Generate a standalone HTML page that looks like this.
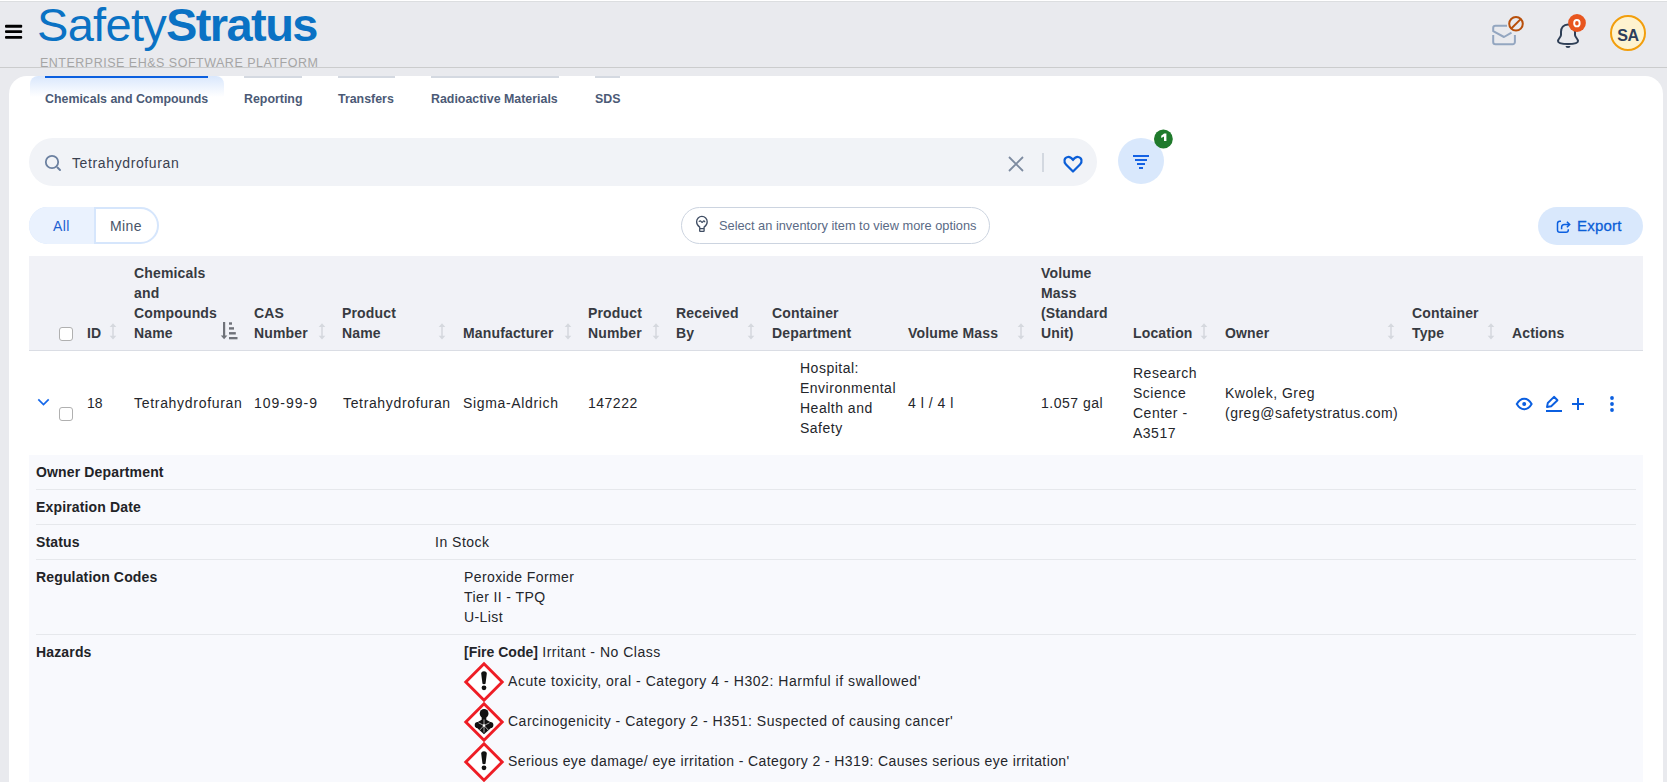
<!DOCTYPE html>
<html><head><meta charset="utf-8">
<style>
*{box-sizing:border-box;margin:0;padding:0}
html,body{width:1667px;height:782px;overflow:hidden}
body{background:#e9eaee;font-family:"Liberation Sans",sans-serif;position:relative;color:#2b303b}
.a{position:absolute;white-space:nowrap}
.topline{position:absolute;left:0;top:0;width:1667px;height:1px;background:#ffffff}
.topb{position:absolute;left:0;top:1px;width:1667px;height:1px;background:#dcdee0}
.hdrb{position:absolute;left:0;top:67px;width:1667px;height:1px;background:#cbcccd}
.card{position:absolute;left:9px;top:76px;width:1654px;height:760px;background:#fff;border-radius:18px}
.burger{position:absolute;left:5px;width:17px;height:3px;background:#000;border-radius:1px}
.logo{left:37px;top:-3px;font-size:47px;line-height:56px;color:#0a72c4}
.ent{left:40px;top:55px;font-size:12.5px;line-height:16px;color:#a5a5a5;letter-spacing:0.5px;height:12px;overflow:hidden}
.tab{font-size:12.4px;font-weight:700;line-height:16px;color:#4b5a76;top:91px}
.tabline{position:absolute;top:76px;height:2px;background:#d4d9e1}
.th{font-size:14px;font-weight:700;line-height:20px;color:#373a41;letter-spacing:0.15px}
.td{font-size:14px;line-height:20px;color:#24262b;letter-spacing:0.5px}
.lbl{font-size:14px;font-weight:700;line-height:20px;color:#222327;left:36px;letter-spacing:0.15px}
.div{position:absolute;left:36px;width:1600px;height:1px;background:#e6e8ec}
.sort{position:absolute;width:7px;height:17px}
.cb{position:absolute;width:14px;height:14px;border:1px solid #b0b0b0;border-radius:3px;background:#fff}
</style></head><body>
<div class="topline"></div><div class="topb"></div>
<div class="hdrb"></div>
<div class="card"></div>

<!-- hamburger -->
<svg class="a" style="left:0;top:20px" width="30" height="24" viewBox="0 20 30 24"><rect x="5" y="24.8" width="17.2" height="2.9" rx="1" fill="#000"/><rect x="5" y="30.3" width="17.2" height="2.8" rx="1" fill="#000"/><rect x="5" y="35.9" width="17.2" height="2.9" rx="1" fill="#000"/></svg>

<div class="a logo"><span style="letter-spacing:-0.7px">Safety</span><span style="font-weight:700;letter-spacing:-1.6px">Stratus</span></div>
<div class="a ent">ENTERPRISE EH&amp;S SOFTWARE PLATFORM</div>


<!-- mail icon -->
<svg class="a" style="left:1488px;top:12px" width="40" height="38" viewBox="1488 12 40 38">
 <path d="M1507 25.8 H1495.5 a2.3 2.3 0 0 0 -2.3 2.3 V31.2 L1504 37 L1511.5 32.6" fill="none" stroke="#93a6c0" stroke-width="2" stroke-linejoin="round"/>
 <path d="M1493.2 35 V42 a2.3 2.3 0 0 0 2.3 2.3 H1512.6 a2.3 2.3 0 0 0 2.3 -2.3 V35" fill="none" stroke="#93a6c0" stroke-width="2"/>
 <circle cx="1516" cy="23.8" r="6.8" fill="none" stroke="#b84f0a" stroke-width="2"/>
 <path d="M1511.3 28.5 L1520.7 19.1" stroke="#b84f0a" stroke-width="2"/>
</svg>
<!-- bell -->
<svg class="a" style="left:1552px;top:12px" width="36" height="40" viewBox="1552 12 36 40">
 <path d="M1568 24.5 c-4.5 0 -7 3.5 -7 7.5 v3 c0 2 -3 4 -3 6 c0 2 4 3 10 3 c6 0 10 -1 10 -3 c0 -2 -3 -4 -3 -6 v-3 c0 -4 -2.5 -7.5 -7 -7.5z" fill="none" stroke="#2e3e55" stroke-width="2"/>
 <path d="M1565.5 46 h5 a2.5 2 0 0 1 -5 0z" fill="#2e3e55"/>
</svg>
<svg class="a" style="left:1566px;top:12px" width="22" height="22" viewBox="1566 12 22 22"><circle cx="1577" cy="23" r="8.9" fill="#e8561f"/><ellipse cx="1576.9" cy="23.2" rx="2.75" ry="3.2" fill="none" stroke="#fff" stroke-width="1.9"/></svg>
<!-- avatar -->
<div class="a" style="left:1610px;top:15px;width:36px;height:36px;border-radius:18px;background:#fef3cf;border:2px solid #f29e0c;color:#2d3e5c;font-size:16px;font-weight:700;line-height:38px;text-align:center;letter-spacing:-0.3px">SA</div>

<!-- tabs -->
<div class="a" style="left:30px;top:76px;width:194px;height:30px;border-radius:8px 8px 0 0;background:linear-gradient(#d9e7fc,#ffffff 70%)"></div>
<div class="tabline" style="left:45px;width:163px;background:#0b5fdf"></div>
<div class="tabline" style="left:244px;width:58px"></div>
<div class="tabline" style="left:338px;width:57px"></div>
<div class="tabline" style="left:431px;width:128px"></div>
<div class="tabline" style="left:595px;width:25px"></div>
<div class="a tab" style="left:45px">Chemicals and Compounds</div>
<div class="a tab" style="left:244px">Reporting</div>
<div class="a tab" style="left:338px">Transfers</div>
<div class="a tab" style="left:431px">Radioactive Materials</div>
<div class="a tab" style="left:595px">SDS</div>

<!-- search -->
<div class="a" style="left:29px;top:138px;width:1068px;height:48px;border-radius:24px;background:#f1f3f7"></div>
<svg class="a" style="left:44px;top:154px" width="20" height="20" viewBox="0 0 20 20">
 <circle cx="8" cy="8" r="6.2" fill="none" stroke="#6b80a0" stroke-width="1.8"/>
 <path d="M13.5 13.5 L16 16" stroke="#6b80a0" stroke-width="2" stroke-linecap="round"/>
</svg>
<div class="a td" style="left:72px;top:153px;color:#3a4150;letter-spacing:0.62px">Tetrahydrofuran</div>
<svg class="a" style="left:1007px;top:155px" width="18" height="18" viewBox="0 0 18 18">
 <path d="M2 2 L16 16 M16 2 L2 16" stroke="#7d8ba0" stroke-width="1.8"/>
</svg>
<div class="a" style="left:1042px;top:153px;width:2px;height:19px;background:#d3d8e0"></div>
<svg class="a" style="left:1062px;top:154px" width="22" height="20" viewBox="0 0 22 20">
 <path d="M11 17.5 L4 10.5 C1.5 8 2 3.5 5.8 3 C8.2 2.7 10 4.5 11 6 C12 4.5 13.8 2.7 16.2 3 C20 3.5 20.5 8 18 10.5 Z" fill="none" stroke="#0b5ed7" stroke-width="2.2" stroke-linejoin="round"/>
</svg>
<!-- filter -->
<div class="a" style="left:1118px;top:138px;width:46px;height:46px;border-radius:23px;background:#d9e8fc"></div>
<div class="a" style="left:1133px;top:155px;width:16px;height:2px;background:#1462e4"></div>
<div class="a" style="left:1135px;top:159px;width:12px;height:2px;background:#1462e4"></div>
<div class="a" style="left:1137px;top:163px;width:8px;height:2px;background:#1462e4"></div>
<div class="a" style="left:1139px;top:167px;width:4px;height:2px;background:#1462e4"></div>
<svg class="a" style="left:1150px;top:126px" width="27" height="27" viewBox="0 0 27 27"><circle cx="13.4" cy="13" r="9.4" fill="#1f7a2c"/><path d="M11.2 9.7 L14.1 7.6 H16.4 V15 H14 V10.4 L11.2 12 Z" fill="#fff"/></svg>

<!-- all / mine -->
<div class="a" style="left:29px;top:207px;width:130px;height:37px;border-radius:19px;background:#fff;border:2px solid #d6e6fc"></div>
<div class="a" style="left:29px;top:207px;width:65px;height:37px;border-radius:19px 0 0 19px;background:#eaf2fe"></div><div class="a" style="left:94px;top:207px;width:2px;height:37px;background:#d6e6fc"></div>
<div class="a" style="left:53px;top:216px;font-size:14px;line-height:20px;color:#1b60d1;letter-spacing:0.4px">All</div>
<div class="a" style="left:110px;top:216px;font-size:14px;line-height:20px;color:#4a5568;letter-spacing:0.4px">Mine</div>

<!-- hint -->
<div class="a" style="left:681px;top:207px;width:309px;height:37px;border-radius:19px;background:#fff;border:1px solid #ccd4e0"></div>
<svg class="a" style="left:692px;top:213px" width="20" height="22" viewBox="0 0 20 22">
 <path d="M7.7 15.8 V14.1 C5.7 12.9 4.6 11 4.6 8.8 C4.6 5.7 7 3.4 9.9 3.4 C12.9 3.4 15.2 5.7 15.2 8.8 C15.2 11 14.1 12.9 12.1 14.1 V15.8" fill="none" stroke="#3f4d63" stroke-width="1.3"/>
 <rect x="7.7" y="15.7" width="4.4" height="2.7" rx="0.5" fill="none" stroke="#3f4d63" stroke-width="1.3"/>
 <path d="M7.2 8.4 C8 7.6 8.5 7.6 9.2 8.6 C9.9 9.6 10.4 9.6 11 8.6 C11.6 7.6 12.1 7.6 12.8 8.8" fill="none" stroke="#3f4d63" stroke-width="1.2" stroke-linecap="round"/>
</svg>
<div class="a" style="left:719px;top:218px;font-size:12.8px;line-height:16px;color:#5a6a85">Select an inventory item to view more options</div>

<!-- export -->
<div class="a" style="left:1538px;top:207px;width:105px;height:38px;border-radius:19px;background:#d9e8fc"></div>
<svg class="a" style="left:1555px;top:218px" width="18" height="18" viewBox="0 0 18 18">
 <path d="M6 3.2 H4.8 a2.3 2.3 0 0 0 -2.3 2.3 V11.9 a2.3 2.3 0 0 0 2.3 2.3 H11 a2.3 2.3 0 0 0 2.3 -2.3 V11.2" fill="none" stroke="#0b5fe0" stroke-width="1.5"/>
 <path d="M6.6 11.2 V9.3 a2.8 2.8 0 0 1 2.8 -2.8 H14.6 M11.9 3.7 L14.7 6.5 L11.9 9.3" fill="none" stroke="#0b5fe0" stroke-width="1.5"/>
</svg>
<div class="a" style="left:1577px;top:216px;font-size:15px;line-height:20px;color:#0b5ed7;letter-spacing:0.2px;-webkit-text-stroke:0.3px #0b5ed7">Export</div>

<!-- table header -->
<div class="a" style="left:29px;top:256px;width:1614px;height:94px;background:#f1f2f7"></div>
<div class="a" style="left:29px;top:350px;width:1614px;height:1px;background:#dadde4"></div>
<div class="cb" style="left:59px;top:327px"></div>
<div class="a th" style="left:87px;top:323px">ID</div>
<div class="a th" style="left:134px;top:263px">Chemicals<br>and<br>Compounds<br>Name</div>
<div class="a th" style="left:254px;top:303px">CAS<br>Number</div>
<div class="a th" style="left:342px;top:303px">Product<br>Name</div>
<div class="a th" style="left:463px;top:323px">Manufacturer</div>
<div class="a th" style="left:588px;top:303px">Product<br>Number</div>
<div class="a th" style="left:676px;top:303px">Received<br>By</div>
<div class="a th" style="left:772px;top:303px">Container<br>Department</div>
<div class="a th" style="left:908px;top:323px">Volume Mass</div>
<div class="a th" style="left:1041px;top:263px">Volume<br>Mass<br>(Standard<br>Unit)</div>
<div class="a th" style="left:1133px;top:323px">Location</div>
<div class="a th" style="left:1225px;top:323px">Owner</div>
<div class="a th" style="left:1412px;top:303px">Container<br>Type</div>
<div class="a th" style="left:1512px;top:323px">Actions</div>
<svg class="a" style="left:109px;top:322.5px" width="8" height="17" viewBox="0 0 8 17"><path d="M4 0.2 L7.3 4 H4.75 V12.7 H7.3 L4 16.5 L0.7 12.7 H3.25 V4 H0.7 Z" fill="#d5d8de"/></svg>
<svg class="a" style="left:318px;top:322.5px" width="8" height="17" viewBox="0 0 8 17"><path d="M4 0.2 L7.3 4 H4.75 V12.7 H7.3 L4 16.5 L0.7 12.7 H3.25 V4 H0.7 Z" fill="#d5d8de"/></svg>
<svg class="a" style="left:438px;top:322.5px" width="8" height="17" viewBox="0 0 8 17"><path d="M4 0.2 L7.3 4 H4.75 V12.7 H7.3 L4 16.5 L0.7 12.7 H3.25 V4 H0.7 Z" fill="#d5d8de"/></svg>
<svg class="a" style="left:564px;top:322.5px" width="8" height="17" viewBox="0 0 8 17"><path d="M4 0.2 L7.3 4 H4.75 V12.7 H7.3 L4 16.5 L0.7 12.7 H3.25 V4 H0.7 Z" fill="#d5d8de"/></svg>
<svg class="a" style="left:652px;top:322.5px" width="8" height="17" viewBox="0 0 8 17"><path d="M4 0.2 L7.3 4 H4.75 V12.7 H7.3 L4 16.5 L0.7 12.7 H3.25 V4 H0.7 Z" fill="#d5d8de"/></svg>
<svg class="a" style="left:747px;top:322.5px" width="8" height="17" viewBox="0 0 8 17"><path d="M4 0.2 L7.3 4 H4.75 V12.7 H7.3 L4 16.5 L0.7 12.7 H3.25 V4 H0.7 Z" fill="#d5d8de"/></svg>
<svg class="a" style="left:1017px;top:322.5px" width="8" height="17" viewBox="0 0 8 17"><path d="M4 0.2 L7.3 4 H4.75 V12.7 H7.3 L4 16.5 L0.7 12.7 H3.25 V4 H0.7 Z" fill="#d5d8de"/></svg>
<svg class="a" style="left:1200px;top:322.5px" width="8" height="17" viewBox="0 0 8 17"><path d="M4 0.2 L7.3 4 H4.75 V12.7 H7.3 L4 16.5 L0.7 12.7 H3.25 V4 H0.7 Z" fill="#d5d8de"/></svg>
<svg class="a" style="left:1387px;top:322.5px" width="8" height="17" viewBox="0 0 8 17"><path d="M4 0.2 L7.3 4 H4.75 V12.7 H7.3 L4 16.5 L0.7 12.7 H3.25 V4 H0.7 Z" fill="#d5d8de"/></svg>
<svg class="a" style="left:1487px;top:322.5px" width="8" height="17" viewBox="0 0 8 17"><path d="M4 0.2 L7.3 4 H4.75 V12.7 H7.3 L4 16.5 L0.7 12.7 H3.25 V4 H0.7 Z" fill="#d5d8de"/></svg>
<svg class="a" style="left:220px;top:321px" width="19" height="20" viewBox="220 321 19 20">
<path d="M224.1 322 V337" stroke="#6f7279" stroke-width="2.2"/><path d="M220.8 335.5 H227.4 L224.1 339.2 Z" fill="#6f7279"/>
<rect x="229" y="322.3" width="3" height="2.4" fill="#6f7279"/><rect x="229" y="327.2" width="5" height="2.4" fill="#6f7279"/>
<rect x="229" y="332.1" width="6.8" height="2.4" fill="#6f7279"/><rect x="229" y="337" width="8.5" height="2.3" fill="#6f7279"/>
</svg>

<svg class="a" style="left:36px;top:397px" width="15" height="11" viewBox="36 397 15 11"><path d="M38.3 399.4 L43.5 404.6 L48.7 399.4" fill="none" stroke="#1668ea" stroke-width="1.7"/></svg>
<div class="cb" style="left:59px;top:407px"></div>
<div class="a td" style="left:87px;top:393px;letter-spacing:0">18</div>
<div class="a td" style="left:134px;top:393px;letter-spacing:0.7px">Tetrahydrofuran</div>
<div class="a td" style="left:254px;top:393px;letter-spacing:1px">109-99-9</div>
<div class="a td" style="left:343px;top:393px;letter-spacing:0.65px">Tetrahydrofuran</div>
<div class="a td" style="left:463px;top:393px;letter-spacing:0.65px">Sigma-Aldrich</div>
<div class="a td" style="left:588px;top:393px">147222</div>
<div class="a td" style="left:800px;top:358px">Hospital:<br>Environmental<br>Health and<br>Safety</div>
<div class="a td" style="left:908px;top:393px">4 l / 4 l</div>
<div class="a td" style="left:1041px;top:393px">1.057 gal</div>
<div class="a td" style="left:1133px;top:363px">Research<br>Science<br>Center -<br>A3517</div>
<div class="a td" style="left:1225px;top:383px">Kwolek, Greg<br>(greg@safetystratus.com)</div>
<svg class="a" style="left:1510px;top:390px" width="115" height="28" viewBox="1510 390 115 28">
<path d="M1516.8 404 C1519 400.2 1521.5 398.8 1524.2 398.8 C1527 398.8 1529.5 400.2 1531.6 404 C1529.5 407.8 1527 409.2 1524.2 409.2 C1521.5 409.2 1519 407.8 1516.8 404 Z" fill="none" stroke="#0b5fe0" stroke-width="2"/>
<circle cx="1524.2" cy="404" r="2" fill="#0b5fe0"/>
<path d="M1547 407 L1547.8 403 L1554 396.8 L1557.5 400.2 L1551.2 406.3 Z" fill="none" stroke="#0b5fe0" stroke-width="1.9" stroke-linejoin="round"/>
<rect x="1546" y="410" width="16" height="2" fill="#0b5fe0"/>
<path d="M1572 404 H1584 M1578 398 V410" stroke="#0b5fe0" stroke-width="2"/>
<circle cx="1612" cy="398" r="1.9" fill="#0b5fe0"/><circle cx="1612" cy="404" r="1.9" fill="#0b5fe0"/><circle cx="1612" cy="410" r="1.9" fill="#0b5fe0"/>
</svg>

<div class="a" style="left:29px;top:455px;width:1614px;height:340px;background:#f8f9fd"></div>
<div class="div" style="top:489px"></div>
<div class="div" style="top:524px"></div>
<div class="div" style="top:559px"></div>
<div class="div" style="top:634px"></div>
<div class="a lbl" style="top:462px">Owner Department</div>
<div class="a lbl" style="top:497px">Expiration Date</div>
<div class="a lbl" style="top:532px">Status</div>
<div class="a td" style="left:435px;top:532px">In Stock</div>
<div class="a lbl" style="top:567px">Regulation Codes</div>
<div class="a td" style="left:464px;top:567px;letter-spacing:0.4px">Peroxide Former<br>Tier II - TPQ<br>U-List</div>
<div class="a lbl" style="top:642px">Hazards</div>
<div class="a td" style="left:464px;top:642px"><b style="letter-spacing:0">[Fire Code]</b> Irritant - No Class</div>
<svg class="a" style="left:462px;top:660px" width="44" height="44" viewBox="-22 -22 44 44">
<path d="M0 -18.2 L18.2 0 L0 18.2 L-18.2 0 Z" fill="#fff" stroke="#ee1d25" stroke-width="2.9" stroke-linejoin="miter"/>
<path d="M-2.8 -8.3 Q-2.8 -10.8 0 -10.8 Q2.8 -10.8 2.8 -8.3 L1.5 1.8 Q0 2.6 -1.5 1.8 Z" fill="#111"/><circle cx="0" cy="5.8" r="2.4" fill="#111"/></svg>
<svg class="a" style="left:462px;top:700px" width="44" height="44" viewBox="-22 -22 44 44">
<path d="M0 -18.2 L18.2 0 L0 18.2 L-18.2 0 Z" fill="#fff" stroke="#ee1d25" stroke-width="2.9" stroke-linejoin="miter"/>
<ellipse cx="0.1" cy="-8.5" rx="4.4" ry="4.5" fill="#111"/><rect x="-2.3" y="-5" width="4.6" height="4" fill="#111"/><circle cx="-6.2" cy="3" r="3.1" fill="#111"/><circle cx="6.3" cy="3" r="3.1" fill="#111"/><path d="M-9.1 4 L0 12.3 L9.2 4 L6.3 -0.1 L2.3 -2.3 H-2.3 L-6.2 -0.1 Z" fill="#111"/><path d="M0 3.5 V-2.5 M0 3.5 L-5.5 0.8 M0 3.5 L5.5 0.8 M0 3.5 L-4.2 8 M0 3.5 L4.2 8 M0 3.5 V10.5" stroke="#fff" stroke-width="0.75" opacity="0.85"/><circle cx="0" cy="3.5" r="1.2" fill="#fff"/></svg>
<svg class="a" style="left:462px;top:740px" width="44" height="44" viewBox="-22 -22 44 44">
<path d="M0 -18.2 L18.2 0 L0 18.2 L-18.2 0 Z" fill="#fff" stroke="#ee1d25" stroke-width="2.9" stroke-linejoin="miter"/>
<path d="M-2.8 -8.3 Q-2.8 -10.8 0 -10.8 Q2.8 -10.8 2.8 -8.3 L1.5 1.8 Q0 2.6 -1.5 1.8 Z" fill="#111"/><circle cx="0" cy="5.8" r="2.4" fill="#111"/></svg>
<div class="a td" style="left:508px;top:671px;letter-spacing:0.55px">Acute toxicity, oral - Category 4 - H302: Harmful if swallowed'</div>
<div class="a td" style="left:508px;top:711px">Carcinogenicity - Category 2 - H351: Suspected of causing cancer'</div>
<div class="a td" style="left:508px;top:751px;letter-spacing:0.41px">Serious eye damage/ eye irritation - Category 2 - H319: Causes serious eye irritation'</div>
</body></html>
